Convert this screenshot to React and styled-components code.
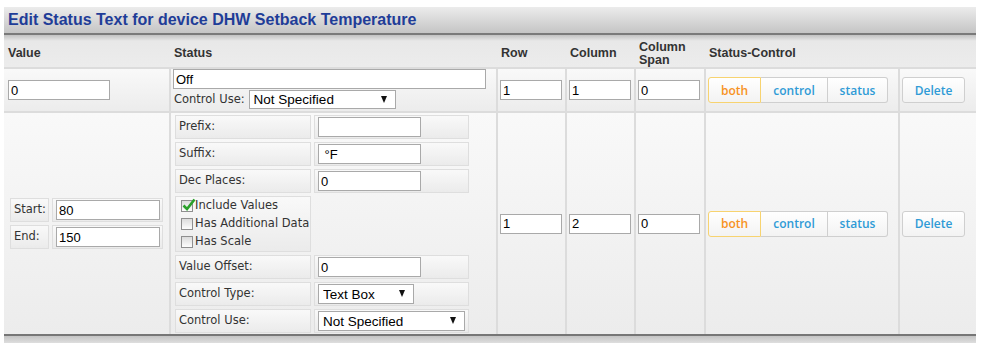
import React from "react";
import styled, { createGlobalStyle } from "styled-components";

const GlobalStyle = createGlobalStyle`
  body {
    margin: 0;
    background: #fff;
    font-family: "DejaVu Sans", sans-serif;
  }
`;

const Panel = styled.div`
  width: 972px;
  margin: 7px 0 0 4px;
`;

const TitleBar = styled.div`
  height: 26px;
  display: flex;
  align-items: center;
  padding-left: 4px;
  background: linear-gradient(#ececec, #c5c5c5);
  border-bottom: 2px solid #7a7a7a;
  font: bold 16px "Liberation Sans", Arial, sans-serif;
  color: #1f3d98;
`;

const Table = styled.table`
  width: 972px;
  border-collapse: collapse;
  table-layout: fixed;
`;

const Th = styled.th`
  height: 27px;
  padding: 5px 4px 0;
  text-align: left;
  vertical-align: middle;
  background: linear-gradient(#c2c2c2 0, #e8e8e8 6px, #ececec 100%);
  font: bold 12.5px/13px "Liberation Sans", Arial, sans-serif;
  color: #333;
`;

const Td = styled.td`
  border-top: 2px solid #dcdcdc;
  border-left: ${(p) => (p.$first ? "none" : "2px solid #dcdcdc")};
  padding: ${(p) => p.$pad || "2px"};
  vertical-align: middle;
  background: linear-gradient(#f9f9f9, #ececec);
  font-size: 11.5px;
  line-height: 1;
`;

const Input = styled.input`
  display: block;
  box-sizing: border-box;
  width: ${(p) => p.$w || 62}px;
  height: 20px;
  margin: 0;
  padding: 0 2px;
  border: 1px solid #a9a9a9;
  background: #fff;
  font: 13px "Liberation Sans", Arial, sans-serif;
  color: #000;
  outline: none;
`;

const SelectWrap = styled.span`
  position: relative;
  display: block;
`;

const Select = styled.select`
  display: block;
  box-sizing: border-box;
  width: ${(p) => p.$w}px;
  height: ${(p) => p.$h || 20}px;
  margin: 0;
  padding: 0 0 0 4px;
  border: 1px solid #a9a9a9;
  border-radius: 0;
  background: #fff;
  appearance: none;
  -webkit-appearance: none;
  font: 13.5px "Liberation Sans", Arial, sans-serif;
  color: #000;
  outline: none;
`;

const Arrow = styled.span`
  position: absolute;
  right: 9px;
  top: 6px;
  width: 0;
  height: 0;
  border-left: 3.5px solid transparent;
  border-right: 3.5px solid transparent;
  border-top: 7px solid #111;
  pointer-events: none;
`;

const Label = styled.span`
  font-size: 11.5px;
  color: #333;
  white-space: nowrap;
`;

const ControlLine = styled.div`
  display: flex;
  align-items: center;
  gap: 4px;
  height: 19px;
  margin-top: 1px;
  padding-left: 1px;
`;

const FieldGrid = styled.div`
  display: grid;
  grid-template-columns: ${(p) => p.$cols};
  grid-template-rows: ${(p) => p.$rows || "none"};
  grid-auto-rows: 24px;
  gap: 3px;
`;

const Box = styled.div`
  box-sizing: border-box;
  display: flex;
  flex-direction: ${(p) => (p.$stack ? "column" : "row")};
  align-items: ${(p) => (p.$stack ? "flex-start" : "center")};
  justify-content: ${(p) => (p.$stack ? "center" : "flex-start")};
  padding: ${(p) => p.$pad || "0 3px"};
  border: 1px solid #dedede;
  background: linear-gradient(#f9f9f9, #ebebeb);
  font-size: 11.5px;
  color: #333;
  white-space: nowrap;
`;

const Blank = styled.div``;

const CheckRow = styled.label`
  display: flex;
  align-items: center;
  height: 18px;
  font-size: 11.5px;
  color: #333;
  white-space: nowrap;
`;

const CheckBox = styled.span`
  position: relative;
  box-sizing: border-box;
  flex: none;
  width: 12px;
  height: 12px;
  margin-right: 2px;
  border: 1px solid #8f8f8f;
  background: linear-gradient(#dcdcdc, #fdfdfd);
  svg {
    position: absolute;
    left: 0;
    top: -3px;
  }
`;

const ButtonGroup = styled.div`
  display: flex;
`;

const Btn = styled.button`
  box-sizing: border-box;
  height: 26px;
  width: ${(p) => p.$w}px;
  margin: 0;
  padding: 0;
  border: 1px solid ${(p) => (p.$active ? "#f7d370" : "#cfcfcf")};
  border-left-width: ${(p) => (p.$joined ? 0 : 1)}px;
  border-radius: ${(p) => p.$radius || "3px"};
  background: linear-gradient(#ffffff, #f3f3f3);
  font: 600 12px "Open Sans", sans-serif;
  color: ${(p) => (p.$active ? "#f7931e" : "#2f9bd6")};
  cursor: pointer;
`;

const Footer = styled.div`
  height: 7px;
  border-top: 2px solid #767676;
  background: linear-gradient(#c4c4c4, #dedede);
`;

const headers = [
  { label: "Value", w: 166 },
  { label: "Status", w: 327 },
  { label: "Row", w: 69 },
  { label: "Column", w: 69 },
  { label: ["Column", "Span"], w: 70 },
  { label: "Status-Control", w: 194 },
  { label: "", w: 77 },
];

function Dropdown({ value, width, height }) {
  return (
    <SelectWrap>
      <Select $w={width} $h={height} defaultValue={value}>
        <option>{value}</option>
      </Select>
      <Arrow />
    </SelectWrap>
  );
}

function Check({ checked, children }) {
  return (
    <CheckRow>
      <CheckBox>
        {checked && (
          <svg width="14" height="14" viewBox="0 0 14 14">
            <path d="M1.5 7.5 L5 11 L12.5 1.5" fill="none" stroke="#2aa02a" strokeWidth="2.6" />
          </svg>
        )}
      </CheckBox>
      {children}
    </CheckRow>
  );
}

function StatusButtons() {
  return (
    <ButtonGroup>
      <Btn $w={53} $active $radius="3px 0 0 3px">both</Btn>
      <Btn $w={67} $joined $radius="0">control</Btn>
      <Btn $w={60} $joined $radius="0 3px 3px 0">status</Btn>
    </ButtonGroup>
  );
}

function PositionCells({ row, col, span }) {
  return (
    <>
      <Td>
        <Input $w={62} defaultValue={row} />
      </Td>
      <Td>
        <Input $w={62} defaultValue={col} />
      </Td>
      <Td>
        <Input $w={62} defaultValue={span} />
      </Td>
      <Td>
        <StatusButtons />
      </Td>
      <Td $pad="2px 2px">
        <Btn $w={63}>Delete</Btn>
      </Td>
    </>
  );
}

export default function App() {
  return (
    <>
      <GlobalStyle />
      <Panel>
        <TitleBar>Edit Status Text for device DHW Setback Temperature</TitleBar>
        <Table>
          <colgroup>
            {headers.map((h, i) => (
              <col key={i} style={{ width: h.w }} />
            ))}
          </colgroup>
          <thead>
            <tr>
              {headers.map((h, i) => (
                <Th key={i}>
                  {Array.isArray(h.label) ? (
                    <>
                      {h.label[0]}
                      <br />
                      {h.label[1]}
                    </>
                  ) : (
                    h.label
                  )}
                </Th>
              ))}
            </tr>
          </thead>
          <tbody>
            <tr>
              <Td $first $pad="2px 4px">
                <Input $w={102} defaultValue="0" />
              </Td>
              <Td $pad="0 2px 2px 2px">
                <Input $w={313} defaultValue="Off" />
                <ControlLine>
                  <Label>Control Use:</Label>
                  <Dropdown value="Not Specified" width={147} height={19} />
                </ControlLine>
              </Td>
              <PositionCells row="1" col="1" span="0" />
            </tr>
            <tr>
              <Td $first $pad="2px 4px 2px 6px">
                <FieldGrid $cols="39px 111px">
                  <Box>Start:</Box>
                  <Box>
                    <Input $w={104} defaultValue="80" />
                  </Box>
                  <Box>End:</Box>
                  <Box>
                    <Input $w={104} defaultValue="150" />
                  </Box>
                </FieldGrid>
              </Td>
              <Td $pad="2px 2px 1px 4px">
                <FieldGrid $cols="136px 155px" $rows="24px 24px 24px 56px 24px 24px 24px">
                  <Box>Prefix:</Box>
                  <Box>
                    <Input $w={103} defaultValue="" />
                  </Box>
                  <Box>Suffix:</Box>
                  <Box>
                    <Input $w={103} defaultValue=" °F" />
                  </Box>
                  <Box>Dec Places:</Box>
                  <Box>
                    <Input $w={103} defaultValue="0" />
                  </Box>
                  <Box $stack $pad="0 2px 0 5px">
                    <Check checked>Include Values</Check>
                    <Check>Has Additional Data</Check>
                    <Check>Has Scale</Check>
                  </Box>
                  <Blank />
                  <Box>Value Offset:</Box>
                  <Box>
                    <Input $w={103} defaultValue="0" />
                  </Box>
                  <Box>Control Type:</Box>
                  <Box>
                    <Dropdown value="Text Box" width={96} />
                  </Box>
                  <Box>Control Use:</Box>
                  <Box>
                    <Dropdown value="Not Specified" width={147} />
                  </Box>
                </FieldGrid>
              </Td>
              <PositionCells row="1" col="2" span="0" />
            </tr>
          </tbody>
        </Table>
        <Footer />
      </Panel>
    </>
  );
}
